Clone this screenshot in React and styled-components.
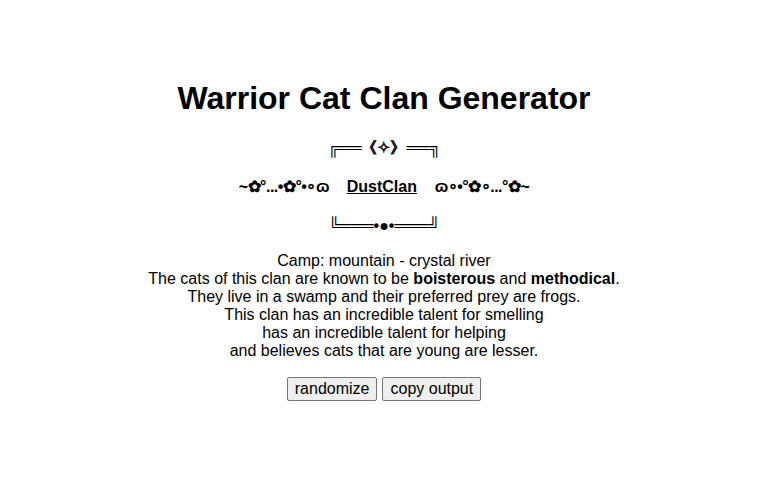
import React from "react";
import styled, { createGlobalStyle } from "styled-components";

const Global = createGlobalStyle`
  html, body { margin: 0; padding: 0; background: #fff; }
  body { font-family: "Liberation Sans", Arial, sans-serif; color: #000; }
`;

const Page = styled.main`
  display: flex;
  flex-direction: column;
  align-items: center;
  padding-top: 80px;
  text-align: center;
`;

const Title = styled.h1`
  margin: 0;
  font-size: 32px;
  line-height: 37px;
  font-weight: 700;
`;

const Deco = styled.div`
  font-weight: 700;
  font-size: 16px;
  line-height: 20px;
  margin-top: ${(p) => p.$mt}px;
  white-space: pre;
  font-family: "Liberation Sans", sans-serif;
`;

const Ornament = styled.span`
  letter-spacing: -0.5px;
`;

const ClanName = styled.span`
  text-decoration: underline;
`;

const Description = styled.div`
  margin-top: 16px;
  font-size: 16px;
  line-height: 18px;
  display: flex;
  flex-direction: column;
  align-items: center;
`;

const Buttons = styled.div`
  margin-top: 17px;
  display: flex;
  gap: 5px;
`;

const Button = styled.button`
  font-family: "Liberation Sans", Arial, sans-serif;
  font-size: 16px;
  line-height: 18px;
  padding: 2px 7px;
  background: #efefef;
  border: 1px solid #767676;
  border-radius: 2px;
  color: #000;
`;

export default function App() {
  return (
    <>
      <Global />
      <Page>
        <Title>Warrior Cat Clan Generator</Title>
        <Deco $mt={21}>{"╔══《✧》══╗"}</Deco>
        <Deco $mt={19}>
          <Ornament>{"~✿°...•✿°•∘ɷ"}</Ornament>
          {"    "}
          <ClanName>DustClan</ClanName>
          {"    "}
          <Ornament>{"ɷ∘•°✿∘...°✿~"}</Ornament>
        </Deco>
        <Deco $mt={19}>{"╚═══•●•═══╝"}</Deco>
        <Description>
          <span>Camp: mountain - crystal river</span>
          <span>
            The cats of this clan are known to be <b>boisterous</b> and <b>methodical</b>.
          </span>
          <span>They live in a swamp and their preferred prey are frogs.</span>
          <span>This clan has an incredible talent for smelling</span>
          <span>has an incredible talent for helping</span>
          <span>and believes cats that are young are lesser.</span>
        </Description>
        <Buttons>
          <Button>randomize</Button>
          <Button>copy output</Button>
        </Buttons>
      </Page>
    </>
  );
}
